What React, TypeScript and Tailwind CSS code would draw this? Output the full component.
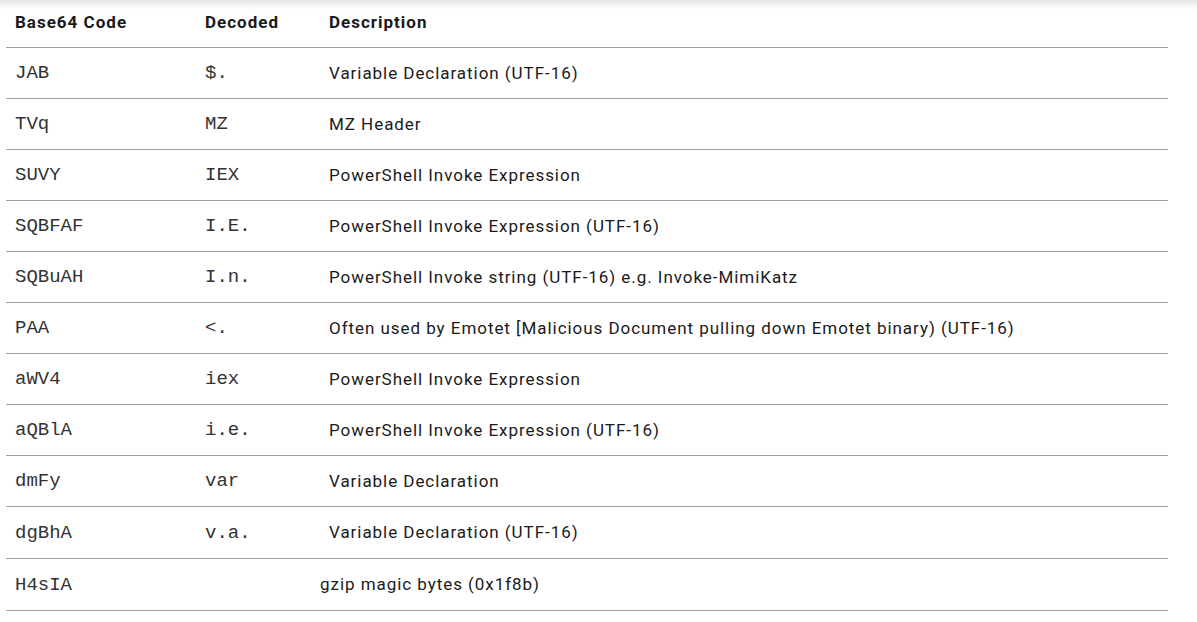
import React from "react";

const rows: [string, string, string][] = [
  ["JAB", "$.", "Variable Declaration (UTF-16)"],
  ["TVq", "MZ", "MZ Header"],
  ["SUVY", "IEX", "PowerShell Invoke Expression"],
  ["SQBFAF", "I.E.", "PowerShell Invoke Expression (UTF-16)"],
  ["SQBuAH", "I.n.", "PowerShell Invoke string (UTF-16) e.g. Invoke-MimiKatz"],
  ["PAA", "<.", "Often used by Emotet [Malicious Document pulling down Emotet binary) (UTF-16)"],
  ["aWV4", "iex", "PowerShell Invoke Expression"],
  ["aQBlA", "i.e.", "PowerShell Invoke Expression (UTF-16)"],
  ["dmFy", "var", "Variable Declaration"],
  ["dgBhA", "v.a.", "Variable Declaration (UTF-16)"],
  ["H4sIA", "", "gzip magic bytes (0x1f8b)"],
];

const sans = { fontFamily: "Roboto, 'Noto Sans', sans-serif" };
const mono = { fontFamily: "'Liberation Mono', 'Courier New', monospace" };

export default function App() {
  return (
    <div className="relative w-[1197px] h-[622px] bg-white overflow-hidden" style={sans}>
      <div className="absolute top-0 left-0 right-0 h-[10px] bg-gradient-to-b from-[#e6e6e6] to-white" />
      <div className="relative ml-[6px] w-[1162px] text-[#1a1a1a]">
        <div className="flex h-[48px] items-center pb-[2px] border-b border-[#a3a3a3] text-[17px] font-bold tracking-[1px]">
          <div className="w-[199px] pl-[9px]">Base64 Code</div>
          <div className="w-[115px]">Decoded</div>
          <div className="pl-[9px]">Description</div>
        </div>
        {rows.map(([code, dec, desc], i) => (
          <div key={i} className={(i >= 9 ? "h-[52px]" : "h-[51px]") + " flex items-center pt-[1px] border-b border-[#a3a3a3]"}>
            <div className="w-[199px] pl-[9px] text-[19px] text-[#333]" style={mono}>{code}</div>
            <div className="w-[115px] text-[19px] text-[#333]" style={mono}>{dec}</div>
            <div className={(dec === "" ? "pl-0" : "pl-[9px]") + " text-[17px] tracking-[0.95px]"}>{desc}</div>
          </div>
        ))}
      </div>
    </div>
  );
}
